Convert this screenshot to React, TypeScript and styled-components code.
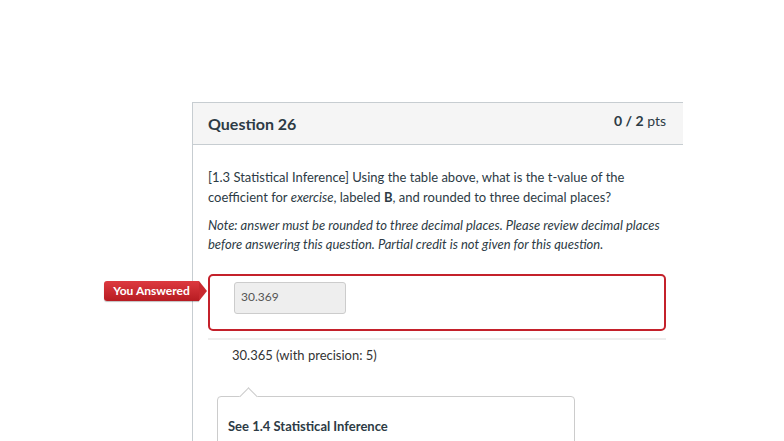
import { FC } from "react";
import styled, { createGlobalStyle } from "styled-components";

const GlobalStyle = createGlobalStyle`
  body {
    margin: 0;
    background: #ffffff;
    font-family: Lato, "Open Sans", "Liberation Sans", sans-serif;
    color: #2d3b45;
  }
`;

const Page = styled.div`
  width: 784px;
  height: 441px;
  overflow: hidden;
  padding: 102px 0 0 192px;
  box-sizing: border-box;
`;

const Card = styled.div`
  width: 490px;
  border-left: 1px solid #c7cdd1;
  border-top: 1px solid #c7cdd1;
`;

const Header = styled.div`
  height: 41px;
  background: #f5f5f5;
  border-bottom: 1px solid #c7cdd1;
  padding: 0 17px 0 15px;
  display: flex;
  justify-content: space-between;
  align-items: center;
`;

const Title = styled.div`
  font-size: 16px;
  font-weight: 700;
  color: #2d3b45;
`;

const Points = styled.div`
  font-size: 14px;
  padding-bottom: 6px;
  color: #2d3b45;
  b {
    font-weight: 700;
  }
`;

const Body = styled.div`
  padding: 22px 17px 0 15px;
`;

const QuestionText = styled.p`
  margin: 0;
  font-size: 13px;
  line-height: 20px;
`;

const Note = styled.p`
  margin: 9px 0 0;
  font-size: 13px;
  line-height: 19px;
  font-style: italic;
`;

const AnswerRow = styled.div`
  position: relative;
  margin-top: 20px;
`;

const AnswerBox = styled.div`
  height: 47px;
  border: 2px solid #c4212b;
  border-radius: 5px;
  padding: 6px 24px 0;
  box-sizing: content-box;
`;

const AnswerInput = styled.div`
  width: 104px;
  height: 30px;
  background: #eeeeee;
  border: 1px solid #cccccc;
  border-radius: 3px;
  font-size: 12px;
  line-height: 28px;
  padding-left: 6px;
  box-sizing: content-box;
  color: #555555;
`;

const Badge = styled.div`
  position: absolute;
  left: -104px;
  top: 7px;
  width: 95px;
  height: 20px;
  border-radius: 3px 0 0 3px;
  background: linear-gradient(#dd3a40, #b71c22);
  box-shadow: 0 1px 1px rgba(0, 0, 0, 0.25);
  color: #ffffff;
  font-size: 12px;
  font-weight: 700;
  line-height: 20px;
  text-align: center;
  &::after {
    content: "";
    position: absolute;
    right: -8px;
    top: 0;
    border-left: 8px solid #c92a30;
    border-top: 10px solid transparent;
    border-bottom: 10px solid transparent;
  }
`;

const Separator = styled.div`
  margin-top: 7px;
  height: 2px;
  background: #eeeeee;
`;

const CorrectAnswer = styled.div`
  margin-top: 5px;
  padding-left: 24px;
  font-size: 13px;
  line-height: 20px;
  color: #333333;
`;

const Comment = styled.div`
  position: relative;
  margin: 31px 0 0 9px;
  width: 358px;
  height: 60px;
  border: 1px solid #cccccc;
  border-radius: 4px;
  background: #ffffff;
  padding: 19px 10px 0;
  box-sizing: border-box;
  font-size: 13px;
  font-weight: 700;
  line-height: 20px;
  color: #2d3b45;
  &::before {
    content: "";
    position: absolute;
    left: 24px;
    top: -7px;
    width: 12px;
    height: 12px;
    background: #ffffff;
    border-left: 1px solid #cccccc;
    border-top: 1px solid #cccccc;
    transform: rotate(45deg);
  }
`;

const App: FC = () => {
  return (
    <Page>
      <GlobalStyle />
      <Card>
        <Header>
          <Title>Question 26</Title>
          <Points>
            <b>0 / 2</b> pts
          </Points>
        </Header>
        <Body>
          <QuestionText>
            [1.3 Statistical Inference] Using the table above, what is the
            t-value of the coefficient for <i>exercise</i>, labeled <b>B</b>,
            and rounded to three decimal places?
          </QuestionText>
          <Note>
            Note: answer must be rounded to three decimal places. Please review
            decimal places before answering this question. Partial credit is
            not given for this question.
          </Note>
          <AnswerRow>
            <Badge>You Answered</Badge>
            <AnswerBox>
              <AnswerInput>30.369</AnswerInput>
            </AnswerBox>
          </AnswerRow>
          <Separator />
          <CorrectAnswer>30.365 (with precision: 5)</CorrectAnswer>
          <Comment>See 1.4 Statistical Inference</Comment>
        </Body>
      </Card>
    </Page>
  );
};

export default App;
